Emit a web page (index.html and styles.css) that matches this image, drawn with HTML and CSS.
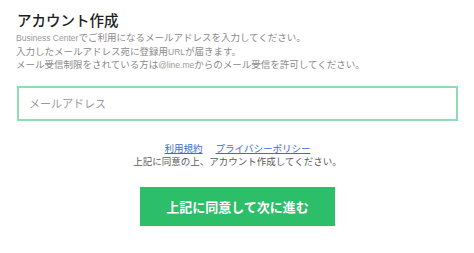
FILE: index.html
```html
<!DOCTYPE html>
<html lang="ja">
<head>
<meta charset="utf-8">
<title>アカウント作成</title>
<link rel="stylesheet" href="styles.css">
</head>
<body>
<main class="page">
  <h1 class="title">アカウント作成</h1>
  <p class="desc"><span class="en">Business Center</span>でご利用になるメールアドレスを入力してください。<br>入力したメールアドレス宛に登録用<span class="en">URL</span>が届きます。<br>メール受信制限をされている方は<span class="en">@line.me</span>からのメール受信を許可してください。</p>
  <div class="field"><input class="input" type="email" placeholder="メールアドレス"></div>
  <div class="terms">
    <div class="links"><a href="#">利用規約</a><a href="#">プライバシーポリシー</a></div>
    <div class="agree">上記に同意の上、アカウント作成してください。</div>
  </div>
  <div class="actions"><button class="btn" type="button">上記に同意して次に進む</button></div>
</main>
</body>
</html>
```
FILE: styles.css
```css
html, body { margin: 0; padding: 0; background: #fff; }
body { font-family: "Noto Sans CJK JP", "Liberation Sans", sans-serif; color: #222; }
.page { padding: 0 16px 0 17px; display: flex; flex-direction: column; }
.title { font-size: 14.5px; font-weight: 500; margin: 10px 0 0; line-height: 20px; color: #1e1e1e; }
.desc { margin: 1px 0 0 -1px; font-size: 9.5px; line-height: 12.5px; color: #8a8a8a; }
.en { font-family: "Liberation Sans", sans-serif; font-size: 8.5px; color: #9a9a9a; }
.field { margin-top: 14px; }
.input { box-sizing: border-box; width: 100%; height: 35px; border: 2px solid #8fdcb5; padding: 0 10px; font-family: inherit; font-size: 11px; outline: none; background: #fff; }
.input::placeholder { color: #9a9a9a; }
.terms { margin-top: 21px; text-align: center; font-size: 9.5px; line-height: 13px; }
.links { display: flex; justify-content: center; gap: 13px; }
.links a { color: #3a6ad6; text-decoration: underline; }
.agree { color: #5a5a5a; }
.actions { display: flex; justify-content: center; margin-top: 19px; }
.btn { width: 195px; height: 39px; border: 0; background: #2dbe69; color: #fff; font-family: inherit; font-size: 13px; font-weight: 700; cursor: pointer; }
```
